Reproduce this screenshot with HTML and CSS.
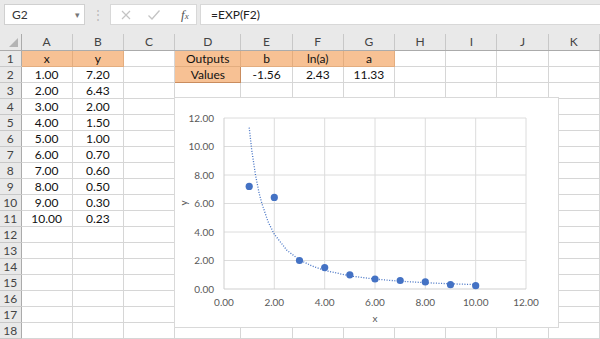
FILE: index.html
```html
<!DOCTYPE html>
<html lang="en">
<head>
    <meta charset="UTF-8">
    <title>Power regression - Excel</title>
    <link rel="stylesheet" href="styles.css">
</head>
<body>
    <div class="formula-bar">
        <div class="name-box">
            <span>G2</span>
            <span class="caret">&#9662;</span>
        </div>
        <div class="grip">&#8942;</div>
        <div class="fx-tools">
            <svg class="tool" width="12" height="12" viewBox="0 0 12 12"><path d="M2 2 L10 10 M10 2 L2 10" stroke="#c4c4c4" stroke-width="1.2" fill="none"/></svg>
            <svg class="tool" width="14" height="12" viewBox="0 0 14 12"><path d="M1.5 6.5 L5 10 L12.5 1.5" stroke="#c4c4c4" stroke-width="1.3" fill="none"/></svg>
            <span class="fx">f<span>x</span></span>
        </div>
        <div class="formula">=EXP(F2)</div>
    </div>

    <div class="sheet">
        <table class="grid">
            <colgroup>
                <col class="c-head"><col class="c-std"><col class="c-std"><col class="c-std"><col class="c-wide">
                <col class="c-std"><col class="c-std"><col class="c-std"><col class="c-std"><col class="c-std"><col class="c-std"><col class="c-std">
            </colgroup>
            <tr class="col-heads">
                <th class="corner"><span class="tri"></span></th>
                <th>A</th><th>B</th><th>C</th><th>D</th><th>E</th><th>F</th><th>G</th><th>H</th><th>I</th><th>J</th><th>K</th>
            </tr>
            <tr><th>1</th><td class="hl">x</td><td class="hl">y</td><td></td><td class="hl box-top">Outputs</td><td class="hl">b</td><td class="hl">ln(a)</td><td class="hl">a</td><td></td><td></td><td></td><td></td></tr>
            <tr><th>2</th><td>1.00</td><td>7.20</td><td></td><td class="hl box-bottom">Values</td><td>-1.56</td><td>2.43</td><td>11.33</td><td></td><td></td><td></td><td></td></tr>
            <tr><th>3</th><td>2.00</td><td>6.43</td><td></td><td></td><td></td><td></td><td></td><td></td><td></td><td></td><td></td></tr>
            <tr><th>4</th><td>3.00</td><td>2.00</td><td></td><td></td><td></td><td></td><td></td><td></td><td></td><td></td><td></td></tr>
            <tr><th>5</th><td>4.00</td><td>1.50</td><td></td><td></td><td></td><td></td><td></td><td></td><td></td><td></td><td></td></tr>
            <tr><th>6</th><td>5.00</td><td>1.00</td><td></td><td></td><td></td><td></td><td></td><td></td><td></td><td></td><td></td></tr>
            <tr><th>7</th><td>6.00</td><td>0.70</td><td></td><td></td><td></td><td></td><td></td><td></td><td></td><td></td><td></td></tr>
            <tr><th>8</th><td>7.00</td><td>0.60</td><td></td><td></td><td></td><td></td><td></td><td></td><td></td><td></td><td></td></tr>
            <tr><th>9</th><td>8.00</td><td>0.50</td><td></td><td></td><td></td><td></td><td></td><td></td><td></td><td></td><td></td></tr>
            <tr><th>10</th><td>9.00</td><td>0.30</td><td></td><td></td><td></td><td></td><td></td><td></td><td></td><td></td><td></td></tr>
            <tr><th>11</th><td>10.00</td><td>0.23</td><td></td><td></td><td></td><td></td><td></td><td></td><td></td><td></td><td></td></tr>
            <tr><th>12</th><td></td><td></td><td></td><td></td><td></td><td></td><td></td><td></td><td></td><td></td><td></td></tr>
            <tr><th>13</th><td></td><td></td><td></td><td></td><td></td><td></td><td></td><td></td><td></td><td></td><td></td></tr>
            <tr><th>14</th><td></td><td></td><td></td><td></td><td></td><td></td><td></td><td></td><td></td><td></td><td></td></tr>
            <tr><th>15</th><td></td><td></td><td></td><td></td><td></td><td></td><td></td><td></td><td></td><td></td><td></td></tr>
            <tr><th>16</th><td></td><td></td><td></td><td></td><td></td><td></td><td></td><td></td><td></td><td></td><td></td></tr>
            <tr><th>17</th><td></td><td></td><td></td><td></td><td></td><td></td><td></td><td></td><td></td><td></td><td></td></tr>
            <tr><th>18</th><td></td><td></td><td></td><td></td><td></td><td></td><td></td><td></td><td></td><td></td><td></td></tr>
        </table>

        <!-- scatter chart floating over the cells -->
        <div class="chart">
            <svg width="385" height="231" viewBox="0 0 385 231">
                <g class="gridlines">
                    <line x1="50" y1="21" x2="352" y2="21"/>
                    <line x1="50" y1="49.5" x2="352" y2="49.5"/>
                    <line x1="50" y1="78" x2="352" y2="78"/>
                    <line x1="50" y1="106.5" x2="352" y2="106.5"/>
                    <line x1="50" y1="135" x2="352" y2="135"/>
                    <line x1="50" y1="163.5" x2="352" y2="163.5"/>
                    <line x1="100.3" y1="21" x2="100.3" y2="192"/>
                    <line x1="150.7" y1="21" x2="150.7" y2="192"/>
                    <line x1="201" y1="21" x2="201" y2="192"/>
                    <line x1="251.3" y1="21" x2="251.3" y2="192"/>
                    <line x1="301.7" y1="21" x2="301.7" y2="192"/>
                    <line x1="352" y1="21" x2="352" y2="192"/>
                </g>
                <line class="axis" x1="50" y1="192" x2="352" y2="192"/>
                <line class="axis" x1="50" y1="21" x2="50" y2="192"/>

                <g class="ticks-y">
                    <text x="40" y="24.5">12.00</text>
                    <text x="40" y="53">10.00</text>
                    <text x="40" y="81.5">8.00</text>
                    <text x="40" y="110">6.00</text>
                    <text x="40" y="138.5">4.00</text>
                    <text x="40" y="167">2.00</text>
                    <text x="40" y="195.5">0.00</text>
                </g>
                <g class="ticks-x">
                    <text x="50" y="209">0.00</text>
                    <text x="100.3" y="209">2.00</text>
                    <text x="150.7" y="209">4.00</text>
                    <text x="201" y="209">6.00</text>
                    <text x="251.3" y="209">8.00</text>
                    <text x="301.7" y="209">10.00</text>
                    <text x="352" y="209">12.00</text>
                </g>
                <text class="axis-title" x="201" y="225">x</text>
                <text class="axis-title" x="0" y="0" transform="translate(13 106) rotate(-90)">y</text>

                <polyline class="trend" points="75.2,30.6 77.7,52.8 81.5,78 85.2,96.5 87.8,106.2 94,124.6 100.3,137.2 112.9,153.3 125.5,162.9 138.1,169 150.7,173.4 175.8,178.9 201,182.1 226.2,184.2 251.3,185.7 276.5,186.8 301.7,187.6"/>

                <g class="points">
                    <circle cx="75.2" cy="89.4" r="3.6"/>
                    <circle cx="100.3" cy="100.4" r="3.6"/>
                    <circle cx="125.5" cy="163.5" r="3.6"/>
                    <circle cx="150.7" cy="170.6" r="3.6"/>
                    <circle cx="175.8" cy="177.8" r="3.6"/>
                    <circle cx="201" cy="182" r="3.6"/>
                    <circle cx="226.2" cy="183.5" r="3.6"/>
                    <circle cx="251.3" cy="184.9" r="3.6"/>
                    <circle cx="276.5" cy="187.7" r="3.6"/>
                    <circle cx="301.7" cy="188.7" r="3.6"/>
                </g>
            </svg>
        </div>
    </div>
</body>
</html>
```

FILE: styles.css
```css
body {
    margin: 0;
    font-family: Lato, "Open Sans", sans-serif;
    background: #fff;
    overflow: hidden;
}

/* formula bar */
.formula-bar {
    display: flex;
    align-items: center;
    height: 34px;
    padding: 0 0 5px 4px;
    box-sizing: border-box;
    background: #e9e9e9;
}
.name-box {
    display: flex;
    align-items: center;
    justify-content: space-between;
    width: 81px;
    height: 21px;
    padding: 0 4px 0 7px;
    box-sizing: border-box;
    background: #fff;
    border: 1px solid #d0d0d0;
    font-size: 12px;
    color: #333;
}
.caret {
    font-size: 9px;
    color: #777;
}
.grip {
    width: 25px;
    text-align: center;
    color: #b8b8b8;
    font-size: 12px;
}
.fx-tools {
    display: flex;
    align-items: center;
    width: 87px;
    height: 21px;
    padding-left: 9px;
    box-sizing: border-box;
    background: #fff;
    border: 1px solid #d8d8d8;
    gap: 15px;
}
.tool {
    display: block;
}
.fx {
    margin-left: 5px;
    font-family: "Liberation Serif", serif;
    font-style: italic;
    font-size: 13px;
    color: #555;
}
.fx span {
    font-size: 9px;
}
.formula {
    flex: 1;
    height: 21px;
    margin-left: 3px;
    padding-left: 10px;
    box-sizing: border-box;
    background: #fff;
    border: 1px solid #d8d8d8;
    border-right: none;
    font-size: 12px;
    line-height: 19px;
    color: #222;
}

/* worksheet grid */
.sheet {
    position: relative;
}
.grid {
    table-layout: fixed;
    border-collapse: collapse;
    width: 600px;
}
.c-head { width: 21px; }
.c-std { width: 51px; }
.c-wide { width: 66px; }
.grid tr {
    height: 16px;
}
.grid td,
.grid th {
    height: 15px;
    padding: 0;
    border: 1px solid #d6d6d6;
    font-size: 12px;
    line-height: 15px;
    text-align: center;
    font-weight: normal;
    overflow: hidden;
    white-space: nowrap;
}
.grid td {
    color: #111;
}
.grid th {
    background: #e9e9e9;
    color: #444;
    border-color: #c8c8c8;
}
.col-heads th {
    border-top: none;
    border-bottom-color: #ababab;
}
.grid tr th:first-child {
    border-left: none;
    border-right-color: #ababab;
}
.corner {
    position: relative;
}
.tri {
    position: absolute;
    right: 3px;
    bottom: 3px;
    width: 0;
    height: 0;
    border-left: 9px solid transparent;
    border-bottom: 9px solid #b4b4b4;
}
.grid td.hl {
    background: #f7c194;
    border-color: #e3ad7f;
}
.grid td.box-top {
    border-left-color: #c98c5e;
    border-top-color: #c98c5e;
}
.grid td.box-bottom {
    border-left-color: #c98c5e;
    border-bottom-color: #c98c5e;
    border-right-color: #c98c5e;
}

/* chart */
.chart {
    position: absolute;
    left: 174px;
    top: 63px;
    width: 385px;
    height: 231px;
    background: #fff;
    border: 1px solid #d9d9d9;
    box-sizing: border-box;
}
.chart svg {
    display: block;
    margin: -1px 0 0 -1px;
    font-family: Lato, "Open Sans", sans-serif;
}
.gridlines line {
    stroke: #dcdcdc;
    stroke-width: 1;
}
.axis {
    stroke: #cfcfcf;
    stroke-width: 1;
}
.ticks-y text {
    font-size: 10px;
    fill: #595959;
    text-anchor: end;
}
.ticks-x text {
    font-size: 10px;
    fill: #595959;
    text-anchor: middle;
}
.axis-title {
    font-size: 10px;
    fill: #595959;
    text-anchor: middle;
}
.trend {
    fill: none;
    stroke: #4472c4;
    stroke-width: 1.3;
    stroke-dasharray: 1 1.6;
}
.points circle {
    fill: #4472c4;
}
```
